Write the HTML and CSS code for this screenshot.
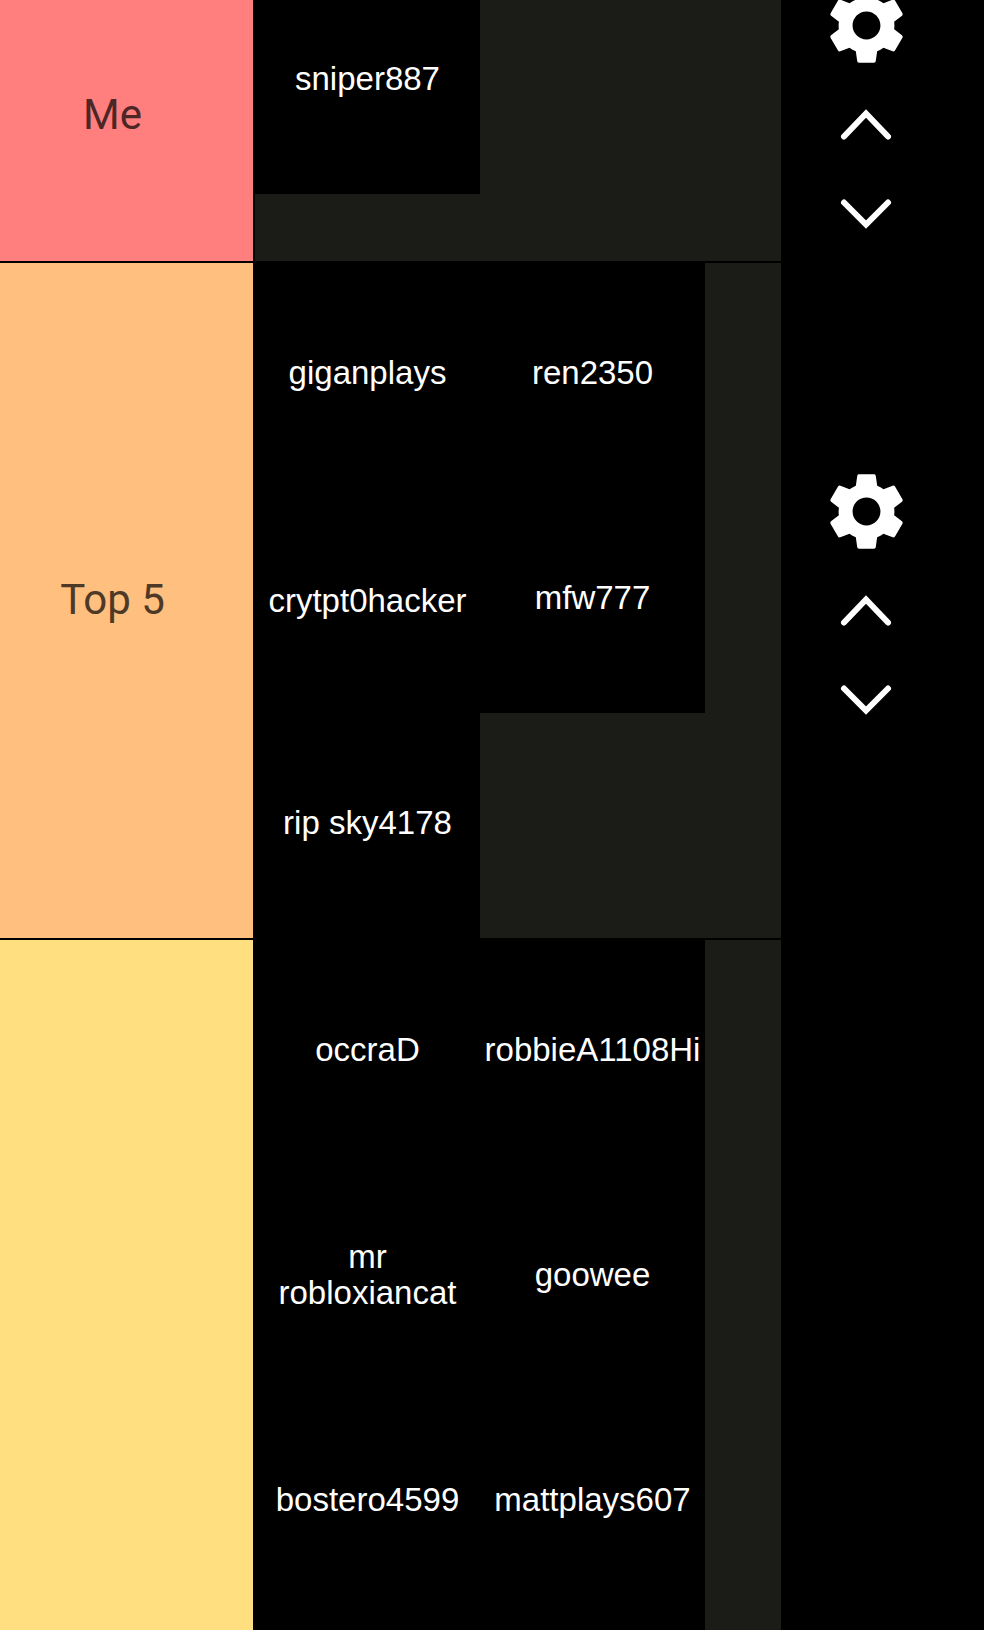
FILE: index.html
```html
<!DOCTYPE html>
<html lang="en">
<head>
    <meta charset="UTF-8">
    <meta name="viewport" content="width=device-width,initial-scale=1.0">
    <title>Tier List</title>
    <link rel="stylesheet" href="styles.css">
</head>
<body>
    <svg class="icon-defs" aria-hidden="true">
        <symbol id="icon-gear" viewBox="0 0 24 24">
            <path d="M19.14 12.94c.04-.3.06-.61.06-.94 0-.32-.02-.64-.07-.94l2.03-1.58c.18-.14.23-.41.12-.61l-1.92-3.32c-.12-.22-.37-.29-.59-.22l-2.39.96c-.5-.38-1.03-.7-1.62-.94l-.36-2.54c-.04-.24-.24-.41-.48-.41h-3.84c-.24 0-.43.17-.47.41l-.36 2.54c-.59.24-1.13.57-1.62.94l-2.39-.96c-.22-.08-.47 0-.59.22L2.74 8.87c-.12.21-.08.47.12.61l2.03 1.58c-.05.3-.09.63-.09.94s.02.64.07.94l-2.03 1.58c-.18.14-.23.41-.12.61l1.92 3.32c.12.22.37.29.59.22l2.39-.96c.5.38 1.03.7 1.62.94l.36 2.54c.05.24.24.41.48.41h3.84c.24 0 .44-.17.47-.41l.36-2.54c.59-.24 1.13-.56 1.62-.94l2.39.96c.22.08.47 0 .59-.22l1.92-3.32c.12-.22.07-.47-.12-.61l-2.01-1.58zM12 15.6c-1.98 0-3.6-1.62-3.6-3.6s1.62-3.6 3.6-3.6 3.6 1.62 3.6 3.6-1.62 3.6-3.6 3.6z"/>
        </symbol>
        <symbol id="icon-up" viewBox="0 0 98 98">
            <polyline points="27,60.5 49,37.5 71,60.5"/>
        </symbol>
        <symbol id="icon-down" viewBox="0 0 98 98">
            <polyline points="27,38.5 49,60.5 71,38.5"/>
        </symbol>
    </svg>

    <div class="tier-list">
        <section class="tier tier-short">
            <div class="tier-label label-red">Me</div>
            <div class="tier-items">
                <div class="item">sniper887</div>
            </div>
            <div class="tier-controls">
                <button class="ctrl-gear" aria-label="Settings"><svg><use href="#icon-gear"/></svg></button>
                <button class="ctrl-arrow" aria-label="Move up"><svg><use href="#icon-up"/></svg></button>
                <button class="ctrl-arrow" aria-label="Move down"><svg><use href="#icon-down"/></svg></button>
            </div>
        </section>

        <section class="tier">
            <div class="tier-label label-orange">Top 5</div>
            <div class="tier-items">
                <div class="item">giganplays</div>
                <div class="item">ren2350</div>
                <div class="item item-low">crytpt0hacker</div>
                <div class="item">mfw777</div>
                <div class="item">rip sky4178</div>
            </div>
            <div class="tier-controls">
                <button class="ctrl-gear" aria-label="Settings"><svg><use href="#icon-gear"/></svg></button>
                <button class="ctrl-arrow" aria-label="Move up"><svg><use href="#icon-up"/></svg></button>
                <button class="ctrl-arrow" aria-label="Move down"><svg><use href="#icon-down"/></svg></button>
            </div>
        </section>

        <section class="tier">
            <div class="tier-label label-yellow"></div>
            <div class="tier-items">
                <div class="item">occraD</div>
                <div class="item">robbieA1108Hi</div>
                <div class="item">mr robloxiancat</div>
                <div class="item">goowee</div>
                <div class="item">bostero4599</div>
                <div class="item">mattplays607</div>
                <div class="item item-cut"></div>
                <div class="item item-cut"></div>
            </div>
            <div class="tier-controls"></div>
        </section>
    </div>
</body>
</html>
```

FILE: styles.css
```css
html, body {
    margin: 0;
    height: 1630px;
    overflow: hidden;
    background: #000;
}
body {
    font-family: "Liberation Sans", Arial, sans-serif;
}
.icon-defs {
    display: none;
}
/* page is scrolled down a little in the shot */
.tier-list {
    margin-top: -31px;
}
.tier {
    display: flex;
    border-bottom: 2px solid #000;
}
.tier:last-child {
    border-bottom: none;
}
.tier-short {
    min-height: 292px;
}
.tier-label {
    width: 253px;
    margin-right: 2px;
    padding: 0 28px 2px 0;
    box-sizing: border-box;
    flex-shrink: 0;
    display: flex;
    align-items: center;
    justify-content: center;
    font-family: Roboto, sans-serif;
    font-size: 42px;
}
.label-red { background: #ff7f7f; color: #4d2626; }
.label-orange { background: #ffbf7f; color: #4d3926; }
.label-yellow { background: #ffdf7f; }
/* Tier items */
.tier-items {
    width: 526px;
    background: #1b1b17;
    display: flex;
    flex-wrap: wrap;
    align-content: flex-start;
}
.item {
    width: 225px;
    height: 225px;
    box-sizing: border-box;
    padding: 0 4px 5px;
    background: #000;
    color: #fff;
    font-size: 33px;
    line-height: 36px;
    text-align: center;
    display: flex;
    align-items: center;
    justify-content: center;
}
.item-low {
    padding-bottom: 0;
}
/* next row of items, only its top edge fits in the shot */
.item-cut {
    height: 15px;
    padding: 0;
}
/* Right hand controls */
.tier-controls {
    flex: 1;
    padding: 6px 33px 0 0;
    display: flex;
    flex-direction: column;
    align-items: center;
    justify-content: center;
}
.tier-controls button {
    padding: 0;
    border: none;
    background: none;
    display: flex;
    align-items: center;
    justify-content: center;
}
.tier-controls svg {
    display: block;
    flex-shrink: 0;
}
.ctrl-gear {
    margin-bottom: 9px;
}
.ctrl-gear svg {
    width: 93px;
    height: 93px;
    fill: #fff;
}
.ctrl-arrow {
    height: 88px;
}
.ctrl-arrow svg {
    width: 98px;
    height: 98px;
    fill: none;
    stroke: #fff;
    stroke-width: 6;
    stroke-linecap: round;
}
```
